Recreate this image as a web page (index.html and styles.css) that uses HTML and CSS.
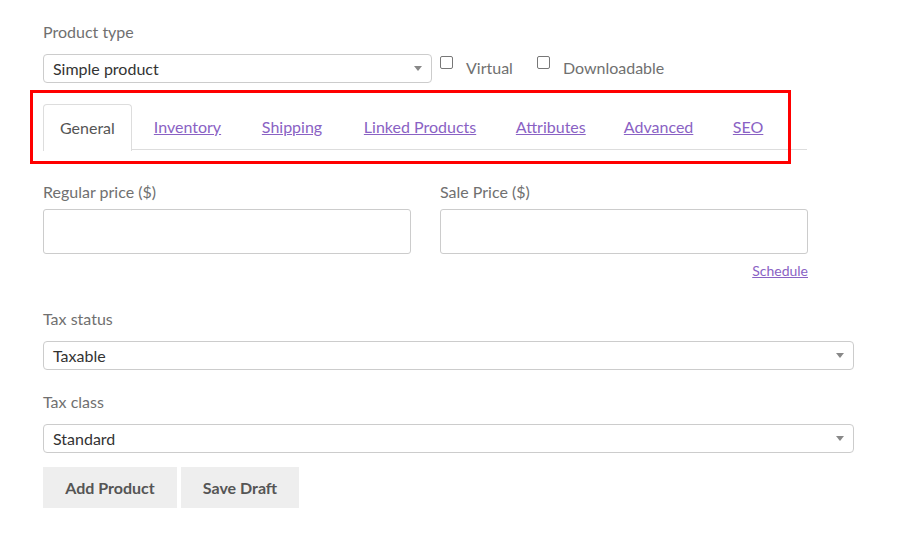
FILE: index.html
```html
<!DOCTYPE html>
<html>
<head>
<meta charset="utf-8">
<link rel="stylesheet" href="styles.css">
</head>
<body>
<div class="page">
  <div class="label first">Product type</div>
  <div class="type-row">
    <div class="select type-select"><span>Simple product</span><span class="caret"></span></div>
    <label class="check"><span class="box"></span><span class="check-text">Virtual</span></label>
    <label class="check"><span class="box"></span><span class="check-text">Downloadable</span></label>
  </div>
  <div class="tabs-area">
    <div class="highlight"></div>
    <ul class="tabs">
      <li class="tab active">General</li>
      <li class="tab t-inventory"><a href="#">Inventory</a></li>
      <li class="tab t-shipping"><a href="#">Shipping</a></li>
      <li class="tab t-linked"><a href="#">Linked Products</a></li>
      <li class="tab t-attributes"><a href="#">Attributes</a></li>
      <li class="tab t-advanced"><a href="#">Advanced</a></li>
      <li class="tab t-seo"><a href="#">SEO</a></li>
    </ul>
  </div>
  <div class="price-grid">
    <div class="col">
      <div class="label">Regular price ($)</div>
      <div class="input"></div>
    </div>
    <div class="col">
      <div class="label">Sale Price ($)</div>
      <div class="input"></div>
      <div class="schedule"><a href="#">Schedule</a></div>
    </div>
  </div>
  <div class="label tax-label">Tax status</div>
  <div class="select wide"><span>Taxable</span><span class="caret"></span></div>
  <div class="label class-label">Tax class</div>
  <div class="select wide"><span>Standard</span><span class="caret"></span></div>
  <div class="buttons">
    <button class="btn add">Add Product</button>
    <button class="btn draft">Save Draft</button>
  </div>
</div>
</body>
</html>
```
FILE: styles.css
```css
* { box-sizing: border-box; }
body {
  margin: 0;
  background: #fff;
  font-family: "Lato", "Liberation Sans", sans-serif;
  font-size: 16px;
  color: #333;
}
.page {
  padding: 22px 0 0 43px;
  width: 854px;
}
.label {
  color: #707070;
  font-size: 16px;
  line-height: 20px;
}
.type-row {
  display: flex;
  align-items: flex-start;
  margin-top: 12px;
}
.select {
  display: flex;
  align-items: center;
  justify-content: space-between;
  height: 29px;
  border: 1px solid #ccc;
  border-radius: 4px;
  padding: 0 9px 0 9px;
  color: #333;
  font-size: 16px;
  background: #fff;
}
.type-select { width: 389px; }
.caret {
  width: 0; height: 0;
  border-left: 4px solid transparent;
  border-right: 4px solid transparent;
  border-top: 5px solid #888;
}
.check {
  display: flex;
  align-items: flex-start;
  color: #707070;
  margin-left: 8px;
}
.check + .check { margin-left: 24px; }
.box {
  width: 13px; height: 13px;
  border: 1px solid #777;
  border-radius: 2px;
  margin-top: 2px;
  background: #fff;
}
.check-text { margin-left: 13px; margin-top: 4px; line-height: 20px; }
.tabs-area {
  position: relative;
  margin-top: 21px;
  width: 764px;
}
.highlight {
  position: absolute;
  left: -13px; top: -14px;
  width: 761px; height: 74px;
  border: 3px solid #ff0000;
  pointer-events: none;
}
.tabs {
  list-style: none;
  margin: 0; padding: 0;
  display: flex;
  border-bottom: 1px solid #ddd;
  height: 46px;
}
.tab {
  height: 46px;
  padding: 0 0 2px 19px;
  display: flex;
  align-items: center;
  font-size: 16px;
  white-space: nowrap;
}
.t-inventory { width: 108px; }
.t-shipping { width: 102px; }
.t-linked { width: 152px; }
.t-attributes { width: 108px; }
.t-advanced { width: 109px; }
.t-seo { width: 50px; }
.tab.active {
  padding: 0 16px 2px;
  border: 1px solid #ddd;
  border-bottom: none;
  border-radius: 4px 4px 0 0;
  color: #555;
  background: #fff;
  height: 47px;
  margin-right: 3px;
}
a { color: #8a62c4; text-decoration: underline; }
.price-grid {
  display: grid;
  grid-template-columns: 368px 368px;
  column-gap: 29px;
  margin-top: 32px;
}
.input {
  margin-top: 7px;
  height: 45px;
  border: 1px solid #ccc;
  border-radius: 3px;
  background: #fff;
}
.schedule {
  text-align: right;
  font-size: 14px;
  margin-top: 8px;
  line-height: 18px;
}
.tax-label { margin-top: 29px; }
.wide { width: 811px; margin-top: 12px; }
.class-label { margin-top: 22px; }
.buttons {
  display: flex;
  gap: 4px;
  margin-top: 14px;
}
.btn {
  font-family: inherit;
  font-size: 16px;
  font-weight: 700;
  color: #555;
  background: #eee;
  border: none;
  height: 41px;
  padding: 0;
}
.btn.add { width: 134px; }
.btn.draft { width: 118px; }
```
